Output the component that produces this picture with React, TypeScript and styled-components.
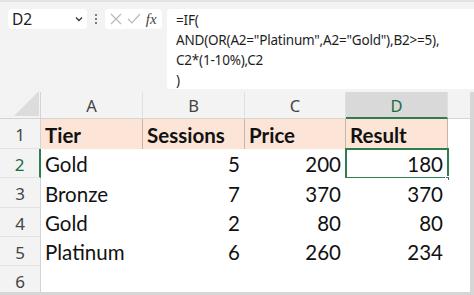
import styled, { createGlobalStyle } from "styled-components";

const GlobalStyle = createGlobalStyle`
    html, body {
        margin: 0;
        padding: 0;
        width: 474px;
        height: 295px;
        overflow: hidden;
        background: #f3f3f3;
    }
`;

const Page = styled.div`
    width: 474px;
    height: 295px;
    display: flex;
    flex-direction: column;
    background: #f3f3f3;
    border-top: 2px solid #e2e2e2;
    box-sizing: border-box;
    overflow: hidden;
`;

// formula bar
const FormulaBar = styled.div`
    height: 93px;
    display: flex;
    align-items: flex-start;
    padding: 7px 0 0 8px;
    box-sizing: border-box;
    font-family: "Noto Sans", "Open Sans", sans-serif;
`;

const NameBox = styled.div`
    flex: 0 0 79px;
    height: 20px;
    background: #fff;
    border-radius: 4px;
    display: flex;
    align-items: center;
    justify-content: space-between;
    padding: 0 4px 0 4px;
    box-sizing: border-box;
    font-size: 15.5px;
    color: #222;
`;

const Chevron = styled.svg`
    width: 8px;
    height: 8px;
`;

const Dots = styled.div`
    flex: 0 0 18px;
    height: 20px;
    display: flex;
    flex-direction: column;
    align-items: center;
    justify-content: center;
    gap: 2px;

    span {
        width: 2px;
        height: 2px;
        border-radius: 1px;
        background: #555;
    }
`;

const ActionBox = styled.div`
    flex: 0 0 57px;
    height: 20px;
    background: #fff;
    border-radius: 4px;
    display: flex;
    align-items: center;
    justify-content: space-around;
    padding: 0 3px;
    box-sizing: border-box;
`;

const Fx = styled.span`
    font-family: "Liberation Serif", serif;
    font-style: italic;
    font-size: 15px;
    color: #444;
`;

const FormulaBox = styled.div`
    flex: 1 1 0;
    min-width: 0;
    overflow: hidden;
    margin-left: 5px;
    height: 80px;
    background: #fff;
    border-radius: 4px 0 0 4px;
    padding: 1px 0 0 9px;
    box-sizing: border-box;
    font-size: 13.5px;
    letter-spacing: -0.2px;
    line-height: 20px;
    color: #1e1e1e;
    white-space: pre;
`;

// sheet grid
const Sheet = styled.div`
    flex: 1;
    display: grid;
    grid-template-columns: 41px 102px 102px 101px 102px 22px 4px;
    grid-template-rows: 27px 30px 29px 30px 29px 29px 29px;
    background: #fff;
    font-family: Lato, "Liberation Sans", sans-serif;
    position: relative;
`;

const Corner = styled.div`
    background: #f3f3f3;
    border-bottom: 1px solid #d4d4d4;
    border-right: 1px solid #d4d4d4;
    position: relative;
    box-sizing: border-box;
`;

const Triangle = styled.div`
    position: absolute;
    right: 1px;
    bottom: 2px;
    width: 0;
    height: 0;
    border-left: 25px solid transparent;
    border-bottom: 25px solid #dcdcdc;
`;

const ColHead = styled.div<{ $active?: boolean }>`
    background: ${p => (p.$active ? "#d9d9d9" : "#f3f3f3")};
    color: ${p => (p.$active ? "#1e6b3e" : "#444")};
    border-bottom: ${p => (p.$active ? "2px solid #2e7d4f" : "1px solid #d4d4d4")};
    border-right: 1px solid #e0e0e0;
    box-sizing: border-box;
    display: flex;
    align-items: center;
    justify-content: center;
    font-family: "Noto Sans", "Open Sans", sans-serif;
    font-size: 16.5px;
    padding-top: 1px;
`;

const RowHead = styled.div<{ $active?: boolean }>`
    background: #f3f3f3;
    color: ${p => (p.$active ? "#1e6b3e" : "#444")};
    border-right: ${p => (p.$active ? "2px solid #2e7d4f" : "1px solid #d4d4d4")};
    border-bottom: 1px solid #e3e3e3;
    box-sizing: border-box;
    display: flex;
    align-items: center;
    justify-content: center;
    font-family: "Noto Sans", "Open Sans", sans-serif;
    font-size: 17px;
    padding-top: 2px;
`;

const Cell = styled.div<{ $head?: boolean; $num?: boolean; $selected?: boolean }>`
    background: ${p => (p.$head ? "#fce4d6" : "#fff")};
    border-right: 1px solid ${p => (p.$head ? "#c9b3a6" : "transparent")};
    box-sizing: border-box;
    display: flex;
    align-items: flex-end;
    justify-content: ${p => (p.$num ? "flex-end" : "flex-start")};
    padding: 0 4px 4px 4px;
    font-size: 20.5px;
    line-height: 1;
    font-weight: ${p => (p.$head ? 700 : 400)};
    color: #111;
    position: relative;
    ${p =>
        p.$selected &&
        `
        outline: 2px solid #2e7d4f;
        outline-offset: -1px;
    `}
`;

const Handle = styled.div`
    position: absolute;
    right: -3px;
    bottom: -3px;
    width: 5px;
    height: 5px;
    background: #2e7d4f;
    border: 1px solid #fff;
    box-sizing: border-box;
`;

const Filler = styled.div<{ $head?: boolean }>`
    background: ${p => (p.$head ? "#f3f3f3" : "#fff")};
    border-bottom: ${p => (p.$head ? "1px solid #d4d4d4" : "none")};
    box-sizing: border-box;
`;

const Edge = styled.div`
    background: #d6d6d6;
`;

const BottomEdge = styled.div`
    position: absolute;
    left: 0;
    right: 0;
    bottom: 0;
    height: 3px;
    background: #d6d6d6;
`;

const columns = ["A", "B", "C", "D"];

const rows: (string | number)[][] = [
    ["Tier", "Sessions", "Price", "Result"],
    ["Gold", 5, 200, 180],
    ["Bronze", 7, 370, 370],
    ["Gold", 2, 80, 80],
    ["Platinum", 6, 260, 234],
    ["", "", "", ""],
];

export default function App() {
    return (
        <>
            <GlobalStyle />
            <Page>
                <FormulaBar>
                    <NameBox>
                        D2
                        <Chevron viewBox="0 0 8 8">
                            <path d="M1 2.5 L4 5.5 L7 2.5" fill="none" stroke="#333" strokeWidth="1.3" />
                        </Chevron>
                    </NameBox>
                    <Dots>
                        <span />
                        <span />
                        <span />
                    </Dots>
                    <ActionBox>
                        <svg width="12" height="12" viewBox="0 0 12 12">
                            <path d="M1 1 L11 11 M11 1 L1 11" stroke="#b9b9b9" strokeWidth="1.2" />
                        </svg>
                        <svg width="14" height="12" viewBox="0 0 14 12">
                            <path d="M1 6 L5 10 L13 1" fill="none" stroke="#b9b9b9" strokeWidth="1.2" />
                        </svg>
                        <Fx>fx</Fx>
                    </ActionBox>
                    <FormulaBox>
                        {`=IF(\nAND(OR(A2="Platinum",A2="Gold"),B2>=5),\nC2*(1-10%),C2\n)`}
                    </FormulaBox>
                </FormulaBar>
                <Sheet>
                    <Corner>
                        <Triangle />
                    </Corner>
                    {columns.map(c => (
                        <ColHead key={c} $active={c === "D"}>
                            {c}
                        </ColHead>
                    ))}
                    <Filler $head />
                    <Edge />
                    {rows.map((row, r) => (
                        <>
                            <RowHead key={`h${r}`} $active={r === 1}>
                                {r + 1}
                            </RowHead>
                            {row.map((v, c) => (
                                <Cell
                                    key={`${r}-${c}`}
                                    $head={r === 0}
                                    $num={typeof v === "number"}
                                    $selected={r === 1 && c === 3}
                                >
                                    {v}
                                    {r === 1 && c === 3 && <Handle />}
                                </Cell>
                            ))}
                            <Filler key={`f${r}`} />
                            <Edge key={`e${r}`} />
                        </>
                    ))}
                    <BottomEdge />
                </Sheet>
            </Page>
        </>
    );
}
